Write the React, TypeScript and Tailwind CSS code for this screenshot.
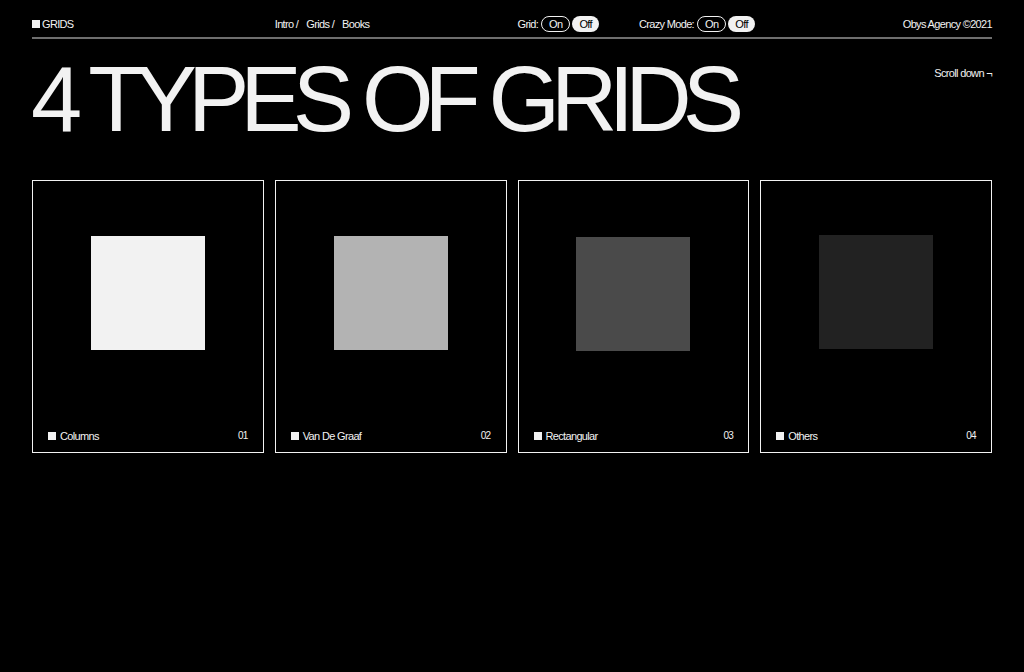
import React from 'react';

type Card = { label: string; num: string; shade: string; offset: string };

const cards: Card[] = [
  { label: 'Columns', num: '01', shade: 'bg-[#f2f2f2]', offset: 'mt-[55px]' },
  { label: 'Van De Graaf', num: '02', shade: 'bg-[#b3b3b3]', offset: 'mt-[55px]' },
  { label: 'Rectangular', num: '03', shade: 'bg-[#4a4a4a]', offset: 'mt-[56px]' },
  { label: 'Others', num: '04', shade: 'bg-[#222222]', offset: 'mt-[54px]' },
];

function Toggle({ label }: { label: string }) {
  return (
    <div className="flex shrink-0 items-center gap-[2px] whitespace-nowrap">
      <span className="mr-[1px]">{label}</span>
      <span className="flex h-[16px] items-center rounded-full border border-[#f2f2f2] px-[7px]">On</span>
      <span className="flex h-[16px] items-center rounded-full bg-[#f2f2f2] px-[7px] text-black">Off</span>
    </div>
  );
}

export default function App() {
  return (
    <div
      className="min-h-[672px] bg-black px-8 text-[#f2f2f2]"
      style={{ fontFamily: '"Liberation Sans", Arial, sans-serif' }}
    >
      <header className="grid h-[39px] grid-cols-4 items-center gap-[11px] border-b-2 border-[#6e6e6e] pt-[11px] text-[11px] tracking-[-0.06em]">
        <div className="flex items-center gap-[2px]">
          <span className="h-[8px] w-[8px] bg-[#f2f2f2]" />
          <span>GRIDS</span>
        </div>
        <div className="flex gap-[8px]">
          <span>Intro /</span>
          <span>Grids /</span>
          <span>Books</span>
        </div>
        <div className="flex items-center gap-[40px] whitespace-nowrap">
          <Toggle label="Grid:" />
          <Toggle label="Crazy Mode:" />
        </div>
        <div className="text-right whitespace-nowrap">Obys Agency ©2021</div>
      </header>

      <section className="flex items-start justify-between pt-[14px]">
        <h1 className="ml-[-1px] text-[92px] leading-[92px] tracking-[-0.097em]">4 TYPES OF GRIDS</h1>
        <div className="mt-[12px] text-[11px] tracking-[-0.06em]">Scroll down ¬</div>
      </section>

      <section className="mt-[35px] grid grid-cols-4 gap-[11px]">
        {cards.map((c) => (
          <div key={c.num} className="flex h-[273px] flex-col items-center border border-[#f2f2f2]">
            <div className={`h-[114px] w-[114px] ${c.shade} ${c.offset}`} />
            <div className="mt-auto mb-[8px] flex w-full items-center justify-between px-[15px] text-[11px] tracking-[-0.06em]">
              <div className="flex items-center gap-[4px]">
                <span className="h-[8px] w-[8px] bg-[#f2f2f2]" />
                <span>{c.label}</span>
              </div>
              <span className="text-[10px]">{c.num}</span>
            </div>
          </div>
        ))}
      </section>
    </div>
  );
}
